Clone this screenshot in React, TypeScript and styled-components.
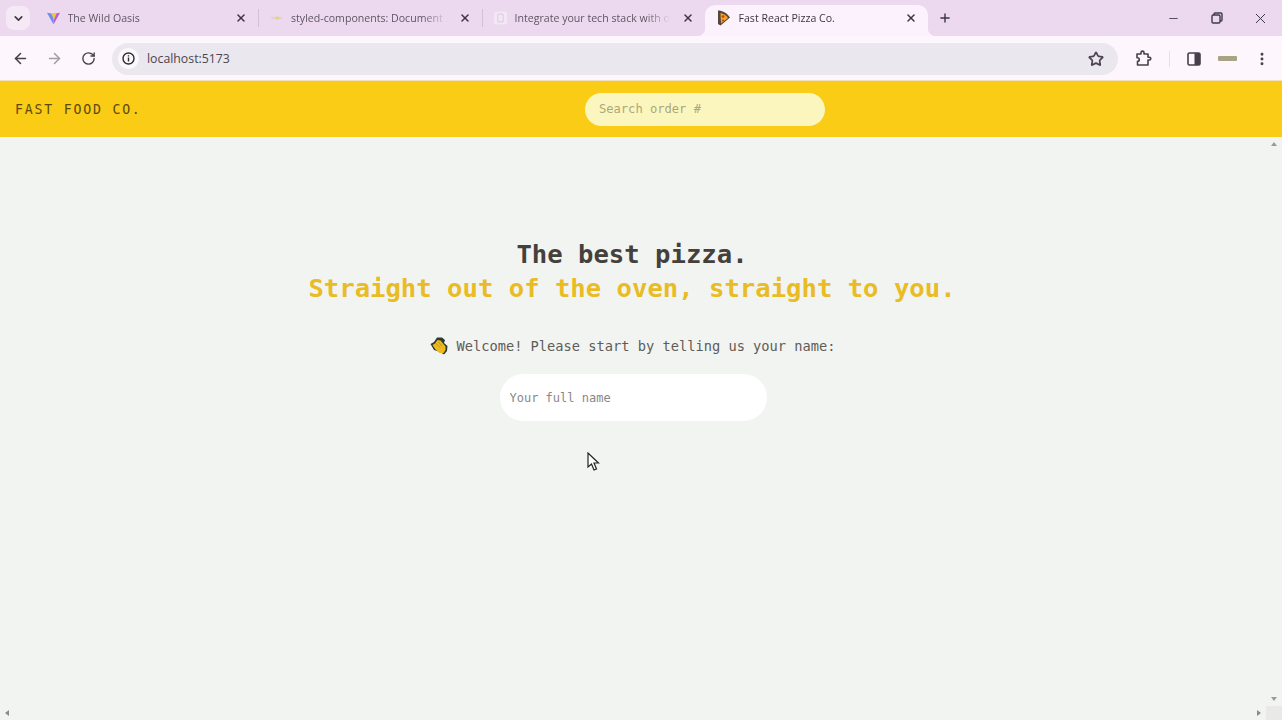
import { ArrowLeft, ArrowRight, ChevronDown, EllipsisVertical, Minus, Plus, RotateCw, Star, X } from "lucide-react"
import styled, { createGlobalStyle } from "styled-components"

const GlobalStyle = createGlobalStyle`
  html, body {
    margin: 0;
    padding: 0;
    height: 100%;
    overflow: hidden;
    background: #f2f4f1;
  }
  * {
    box-sizing: border-box;
  }
`

const Window = styled.div`
  height: 100vh;
  display: flex;
  flex-direction: column;
  font-family: "Open Sans", "Noto Sans", sans-serif;
`

const TabStrip = styled.div`
  height: 36px;
  flex: none;
  display: flex;
  align-items: flex-end;
  background: #ecd9ef;
  color: #3f3644;
`

const TabMenu = styled.div`
  width: 24px;
  height: 24px;
  margin: 0 5.5px 6px 6px;
  flex: none;
  border-radius: 8px;
  background: #f5e9f6;
  display: flex;
  align-items: center;
  justify-content: center;
`

const Tab = styled.div<{ $active?: boolean }>`
  width: 222.5px;
  height: ${(p) => (p.$active ? "31px" : "36px")};
  flex: none;
  padding: ${(p) => (p.$active ? "0 11px 5px 11.5px" : "0 11px 0 10px")};
  display: flex;
  align-items: center;
  gap: 7px;
  position: relative;
  border-radius: 10px 10px 0 0;
  background: ${(p) => (p.$active ? "#fcf2fd" : "transparent")};
  color: ${(p) => (p.$active ? "#3d3640" : "#5f5664")};

  ${(p) =>
    p.$active &&
    `
    &::before, &::after {
      content: "";
      position: absolute;
      bottom: 0;
      width: 8px;
      height: 8px;
    }
    &::before {
      left: -8px;
      background: radial-gradient(circle at 0 0, transparent 8px, #fcf2fd 8.5px);
    }
    &::after {
      right: -8px;
      background: radial-gradient(circle at 100% 0, transparent 8px, #fcf2fd 8.5px);
    }
  `}
`

const Favicon = styled.svg`
  width: 15px;
  height: 16px;
  flex: none;
`

const TabTitle = styled.span`
  flex: 1;
  min-width: 0;
  font-size: 10.6px;
  line-height: 16px;
  white-space: nowrap;
  overflow: hidden;
  mask-image: linear-gradient(to right, #000 82%, transparent 97%);
`

const TabClose = styled(X)`
  width: 12px;
  height: 12px;
  flex: none;
  color: #3c3440;
  stroke-width: 3;
`

const TabDivider = styled.div`
  width: 1px;
  height: 18px;
  margin-bottom: 9px;
  flex: none;
  background: #d3bfd6;
`

const NewTab = styled(Plus)`
  width: 14px;
  height: 14px;
  margin: 0 0 11px 10px;
  flex: none;
  color: #3c3440;
  stroke-width: 2.4;
`

const WindowControls = styled.div`
  margin-left: auto;
  height: 36px;
  display: flex;
  align-items: center;
  color: #40384a;
`

const WindowButton = styled.div`
  width: 43.5px;
  display: flex;
  justify-content: center;
`

const Toolbar = styled.div`
  height: 45px;
  flex: none;
  padding: 6px 0 5px 0;
  display: flex;
  align-items: center;
  background: #fdf6fd;
  border-bottom: 1px solid #f0e0c0;
  color: #46404c;
`

const NavButton = styled.div<{ $muted?: boolean }>`
  width: 34px;
  display: flex;
  justify-content: center;
  color: ${(p) => (p.$muted ? "#a39da8" : "#45404a")};
  &:first-child {
    margin-left: 3px;
  }
`

const Omnibox = styled.div`
  width: 1006px;
  height: 32px;
  margin-left: 7px;
  padding: 0 14px 0 6px;
  flex: none;
  display: flex;
  align-items: center;
  border-radius: 16px;
  background: #ebe7ee;
  font-size: 12.3px;
  color: #4a4550;
`

const InfoBadge = styled.div`
  width: 21px;
  height: 21px;
  margin-right: 8px;
  flex: none;
  border-radius: 50%;
  background: #fbf8fb;
  display: flex;
  align-items: center;
  justify-content: center;
`

const BookmarkStar = styled(Star)`
  margin-left: auto;
  width: 16px;
  height: 16px;
  stroke-width: 2.6;
`

const ToolbarActions = styled.div`
  flex: 1;
  display: flex;
  align-items: center;
  justify-content: space-between;
  padding: 0 12px 0 17px;
`

const ActionDivider = styled.div`
  width: 1px;
  height: 16px;
  background: #e6dfe8;
`

const ProfilePill = styled.div`
  width: 19px;
  height: 5px;
  background: #a8a384;
  border-radius: 1px;
`

const AppHeader = styled.header`
  height: 56px;
  flex: none;
  padding: 0 15px;
  display: flex;
  align-items: center;
  justify-content: space-between;
  background: #facc15;
  font-family: "DejaVu Sans Mono", monospace;
`

const Logo = styled.a`
  width: 128px;
  font-size: 13.2px;
  letter-spacing: 1.8px;
  color: #5c4a0c;
  white-space: nowrap;
`

const SearchInput = styled.input`
  width: 240px;
  height: 33px;
  padding: 0 14px;
  border: none;
  border-radius: 17px;
  outline: none;
  background: #fbf6bd;
  font-family: inherit;
  font-size: 12.1px;
  &::placeholder {
    color: #aca77f;
    opacity: 1;
  }
`

const PageArea = styled.div`
  flex: 1;
  min-height: 0;
  display: grid;
  grid-template-columns: 1fr 16px;
  grid-template-rows: 1fr 14px;
  background: #f2f4f1;
`

const Main = styled.main`
  padding-top: 100px;
  text-align: center;
  font-family: "DejaVu Sans Mono", monospace;
  position: relative;
`

const Heading = styled.h1`
  margin: 0 0 31px;
  padding-right: 2px;
  font-size: 25.6px;
  line-height: 34px;
  font-weight: 700;
  color: #44403c;
`

const Accent = styled.span`
  display: block;
  color: #e9bc25;
`

const Welcome = styled.p`
  margin: 0 0 18px;
  display: flex;
  align-items: center;
  justify-content: center;
  gap: 8px;
  font-size: 13.7px;
  line-height: 20px;
  color: #5f5c58;
`

const NameInput = styled.input`
  display: block;
  width: 267px;
  height: 47px;
  margin: 0 auto;
  padding: 0 10px;
  border: none;
  border-radius: 24px;
  outline: none;
  background: #fff;
  font-family: inherit;
  font-size: 12px;
  &::placeholder {
    color: #8a8784;
    opacity: 1;
  }
`

const Cursor = styled.svg`
  position: absolute;
  left: 587px;
  top: 315px;
  width: 13px;
  height: 20px;
`

const VerticalBar = styled.div`
  padding: 5px 0 5px;
  display: flex;
  flex-direction: column;
  justify-content: space-between;
  align-items: center;
`

const HorizontalBar = styled.div`
  padding: 0 5px;
  display: flex;
  align-items: center;
  justify-content: space-between;
`

const ScrollCorner = styled.div`
  background: #e9eae8;
`

const ScrollArrow = styled.div<{ $dir: "up" | "down" | "left" | "right" }>`
  width: 0;
  height: 0;
  border: 3.5px solid transparent;
  ${(p) => (p.$dir === "up" ? "border-top: 0; border-bottom: 4px solid #9a9a9a;" : "")}
  ${(p) => (p.$dir === "down" ? "border-bottom: 0; border-top: 4px solid #9a9a9a;" : "")}
  ${(p) => (p.$dir === "left" ? "border-left: 0; border-right: 4px solid #8a8a8a;" : "")}
  ${(p) => (p.$dir === "right" ? "border-right: 0; border-left: 4px solid #8a8a8a;" : "")}
`

function ViteIcon() {
  return (
    <Favicon viewBox="0 0 16 16">
      <path d="M1 2.5 L8 15 L8 3.5 Z" fill="#6f8cf0" />
      <path d="M15 2.5 L8 15 L8 3.5 Z" fill="#b35ce6" />
      <path d="M5 2.5 L8.5 3.2 L11.5 2 L8.5 10 L7 6.5 Z" fill="#f3c640" />
    </Favicon>
  )
}

function DocsIcon() {
  return (
    <Favicon viewBox="0 0 16 16">
      <ellipse cx="8" cy="8" rx="6.5" ry="1.6" fill="#e3cfdc" />
      <circle cx="9" cy="8" r="1.7" fill="#ecd165" />
    </Favicon>
  )
}

function StackIcon() {
  return (
    <Favicon viewBox="0 0 16 16">
      <rect x="1" y="1" width="14" height="14" rx="3" fill="#f3e6f5" />
      <rect x="5" y="4" width="6" height="8" rx="1" fill="none" stroke="#e2d2e6" strokeWidth="1.4" />
    </Favicon>
  )
}

function PizzaIcon() {
  return (
    <Favicon viewBox="0 0 15 16">
      <path d="M1 0.5 C5 0.5 10 3 13 7.5 L3.5 15.5 L1 14 Z" fill="#55463c" />
      <path d="M3.5 3 C6.5 3.5 9.5 5.5 11 8 L4 13.5 Z" fill="#f5a524" />
      <circle cx="6" cy="6.5" r="1.3" fill="#c2410c" />
      <circle cx="6" cy="10.5" r="1" fill="#c2410c" />
    </Favicon>
  )
}

function RestoreIcon() {
  return (
    <svg width="12" height="12" viewBox="0 0 12 12" fill="none" stroke="currentColor" strokeWidth="1.4">
      <rect x="1" y="3" width="8" height="8" rx="1.2" />
      <path d="M3 3 V2 a1 1 0 0 1 1 -1 H10 a1 1 0 0 1 1 1 V8 a1 1 0 0 1 -1 1 H9" />
    </svg>
  )
}

function SidePanelIcon() {
  return (
    <svg width="14" height="14" viewBox="0 0 14 14">
      <rect x="1" y="1" width="12" height="12" rx="1.5" fill="#fdf6fd" stroke="#46404c" strokeWidth="1.6" />
      <rect x="7.5" y="1" width="5.5" height="12" fill="#46404c" />
    </svg>
  )
}

function ExtensionIcon() {
  return (
    <svg width="17" height="17" viewBox="0 0 17 17" fill="none" stroke="#46404c" strokeWidth="1.6" strokeLinejoin="round">
      <path d="M2 4 H6 V2.6 a1.5 1.5 0 0 1 3 0 V4 H13 V7.2 H14.4 a1.4 1.4 0 0 1 0 2.8 H13 V15 H2.5 V11.4 a1.8 1.8 0 0 0 0 -3.6 H2 Z" />
    </svg>
  )
}

function InfoIcon() {
  return (
    <svg width="13" height="13" viewBox="0 0 13 13" fill="none" stroke="#2f2b33" strokeWidth="1.4">
      <circle cx="6.5" cy="6.5" r="5.5" />
      <path d="M6.5 5.6 V9.6 M6.5 3.3 V4.5" />
    </svg>
  )
}

function WaveIcon() {
  return (
    <svg width="18" height="18" viewBox="0 0 18 18">
      <path d="M0.5 7 L4 5 L7 0.5 L12 0.5 L15 3 L14 6 L17.5 9 L17 14 L14 17.5 L10 15 L4 13 Z" fill="#2f3a30" />
      <path d="M2.5 8 L5 6.5 L7.5 3 L10.5 3.5 L13 6.5 L15.5 9.5 L15.5 13 L13.5 16 L9.5 16 L5.5 12.5 Z" fill="#eeb91f" />
      <path d="M6 6.5 L10 10.5 M8.5 5 L12 9" stroke="#b88a14" strokeWidth="0.8" />
    </svg>
  )
}

export default function App() {
  return (
    <Window>
      <GlobalStyle />
      <TabStrip>
        <TabMenu>
          <ChevronDown size={13} strokeWidth={3} />
        </TabMenu>
        <Tab>
          <ViteIcon />
          <TabTitle>The Wild Oasis</TabTitle>
          <TabClose />
        </Tab>
        <TabDivider />
        <Tab>
          <DocsIcon />
          <TabTitle>styled-components: Document</TabTitle>
          <TabClose />
        </Tab>
        <TabDivider />
        <Tab>
          <StackIcon />
          <TabTitle>Integrate your tech stack with o</TabTitle>
          <TabClose />
        </Tab>
        <Tab $active>
          <PizzaIcon />
          <TabTitle>Fast React Pizza Co.</TabTitle>
          <TabClose />
        </Tab>
        <NewTab />
        <WindowControls>
          <WindowButton>
            <Minus size={13} strokeWidth={1.6} />
          </WindowButton>
          <WindowButton>
            <RestoreIcon />
          </WindowButton>
          <WindowButton>
            <X size={17} strokeWidth={1.4} />
          </WindowButton>
        </WindowControls>
      </TabStrip>

      <Toolbar>
        <NavButton>
          <ArrowLeft size={17} strokeWidth={2.2} />
        </NavButton>
        <NavButton $muted>
          <ArrowRight size={17} strokeWidth={2.2} />
        </NavButton>
        <NavButton>
          <RotateCw size={15} strokeWidth={2.2} />
        </NavButton>
        <Omnibox>
          <InfoBadge>
            <InfoIcon />
          </InfoBadge>
          localhost:5173
          <BookmarkStar />
        </Omnibox>
        <ToolbarActions>
          <ExtensionIcon />
          <ActionDivider />
          <SidePanelIcon />
          <ProfilePill />
          <EllipsisVertical size={16} strokeWidth={2.4} />
        </ToolbarActions>
      </Toolbar>

      <AppHeader>
        <Logo>FAST FOOD CO.</Logo>
        <SearchInput placeholder="Search order #" />
        <div />
      </AppHeader>

      <PageArea>
        <Main>
          <Heading>
            The best pizza.
            <Accent>Straight out of the oven, straight to you.</Accent>
          </Heading>
          <Welcome>
            <WaveIcon />
            Welcome! Please start by telling us your name:
          </Welcome>
          <NameInput placeholder="Your full name" />
          <Cursor viewBox="0 0 13 20">
            <path d="M1 1 L1 15 L4.5 12 L7 18 L9.5 17 L7 11 L11.5 11 Z" fill="#fff" stroke="#222" strokeWidth="1.2" />
          </Cursor>
        </Main>
        <VerticalBar>
          <ScrollArrow $dir="up" />
          <ScrollArrow $dir="down" />
        </VerticalBar>
        <HorizontalBar>
          <ScrollArrow $dir="left" />
          <ScrollArrow $dir="right" />
        </HorizontalBar>
        <ScrollCorner />
      </PageArea>
    </Window>
  )
}
